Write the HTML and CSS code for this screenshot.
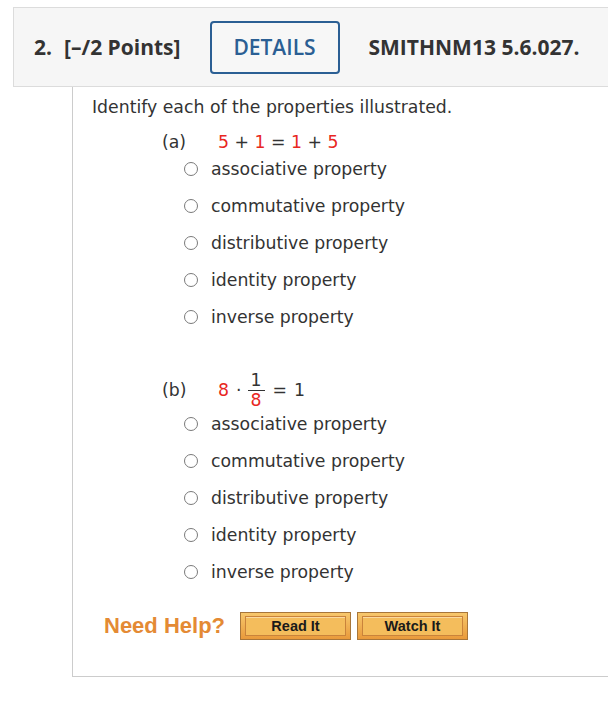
FILE: index.html
```html
<!DOCTYPE html>
<html>
<head>
<meta charset="utf-8">
<link rel="stylesheet" href="styles.css">
</head>
<body>
<div class="header">
  <span class="qnum">2.</span>
  <span class="points">[–/2 Points]</span>
  <button class="details">DETAILS</button>
  <span class="code">SMITHNM13 5.6.027.</span>
</div>
<div class="content">
  <p class="prompt">Identify each of the properties illustrated.</p>

  <div class="part part-a">
    <div class="part-head"><span class="label">(a)</span><span class="expr"><span class="red">5</span> + <span class="red">1</span> = <span class="red">1</span> + <span class="red">5</span></span></div>
    <ul class="options">
      <li><span class="radio"></span>associative property</li>
      <li><span class="radio"></span>commutative property</li>
      <li><span class="radio"></span>distributive property</li>
      <li><span class="radio"></span>identity property</li>
      <li><span class="radio"></span>inverse property</li>
    </ul>
  </div>

  <div class="part part-b">
    <div class="part-head"><span class="label">(b)</span><span class="expr"><span class="red">8</span><span class="dot">·</span><span class="frac"><span class="num">1</span><span class="den red">8</span></span><span class="eq">=</span>1</span></div>
    <ul class="options">
      <li><span class="radio"></span>associative property</li>
      <li><span class="radio"></span>commutative property</li>
      <li><span class="radio"></span>distributive property</li>
      <li><span class="radio"></span>identity property</li>
      <li><span class="radio"></span>inverse property</li>
    </ul>
  </div>

  <div class="help">
    <span class="need">Need Help?</span>
    <span class="hbtn"><span class="hbtn-in">Read It</span></span>
    <span class="hbtn"><span class="hbtn-in">Watch It</span></span>
  </div>
</div>
</body>
</html>
```
FILE: styles.css
```css
html, body {
  margin: 0;
  padding: 0;
  background: #fff;
}
body {
  padding-top: 7px;
  font-family: "DejaVu Sans", Verdana, sans-serif;
  color: #333;
}
.header {
  margin-left: 13px;
  height: 78px;
  background: #f6f6f6;
  border: 1px solid #dcdcdc;
  border-right: none;
  display: flex;
  align-items: center;
  padding-left: 20px;
  font-family: "Open Sans", sans-serif;
  font-weight: 700;
  font-size: 21px;
  color: #333;
}
.qnum {
  margin-right: 12px;
}
.points {
  margin-right: 29px;
}
.details {
  box-sizing: border-box;
  width: 130px;
  height: 53px;
  border: 2px solid #2b5f94;
  border-radius: 4px;
  background: #f7f7f7;
  color: #2b5f94;
  font-family: "Open Sans", sans-serif;
  font-weight: 600;
  font-size: 21px;
  padding: 0;
  margin-right: 29px;
}
.code {
  font-weight: 700;
}
.content {
  margin-left: 72px;
  border-left: 1px solid #ccc;
  border-bottom: 1px solid #ccc;
  height: 589px;
  padding-left: 19px;
  font-size: 17.3px;
}
.prompt {
  margin: 0;
  padding-top: 9px;
  line-height: 22px;
}
.part {
  margin-left: 70px;
}
.part-a {
  margin-top: 13px;
}
.part-b {
  margin-top: 43px;
}
.part-head {
  display: flex;
  align-items: center;
  height: 22px;
}
.part-b .part-head {
  height: 37px;
}
.label {
  width: 56px;
}
.expr {
  display: inline-flex;
  align-items: center;
  white-space: pre;
}
.red {
  color: #e8271f;
}
.dot {
  margin: 0 6px 0 7px;
}
.eq {
  margin: 0 7px 0 8px;
}
.frac {
  display: inline-flex;
  flex-direction: column;
  align-items: center;
  line-height: 19px;
  margin-top: 2px;
}
.num {
  border-bottom: 1px solid #333;
  padding: 0 3px;
}
.options {
  list-style: none;
  margin: 5px 0 0;
  padding: 0 0 0 22px;
  display: flex;
  flex-direction: column;
  gap: 15px;
}
.options li {
  display: flex;
  align-items: center;
  height: 22px;
}
.radio {
  box-sizing: border-box;
  width: 14px;
  height: 14px;
  border: 1.3px solid #7a7a7a;
  border-radius: 50%;
  margin-right: 13px;
  background: #fff;
}
.help {
  display: flex;
  align-items: center;
  margin-left: 12px;
  margin-top: 29px;
}
.need {
  font-family: "Liberation Sans", Arial, sans-serif;
  font-weight: 700;
  font-size: 22px;
  color: #e48a34;
  margin-right: 15px;
}
.hbtn {
  box-sizing: border-box;
  display: inline-flex;
  width: 111px;
  height: 28px;
  border: 1px solid #a8763a;
  background: linear-gradient(#f7c76c, #e99a3b);
  padding: 3px 4px;
  margin-right: 6px;
}
.hbtn-in {
  flex: 1;
  display: flex;
  align-items: center;
  justify-content: center;
  border: 1px solid #c9833b;
  background: #f4bd5c;
  box-shadow: inset 0 1px 0 #fbd9a0;
  font-family: "Liberation Sans", Arial, sans-serif;
  font-weight: 700;
  font-size: 14.5px;
  color: #1a1a1a;
}
```
